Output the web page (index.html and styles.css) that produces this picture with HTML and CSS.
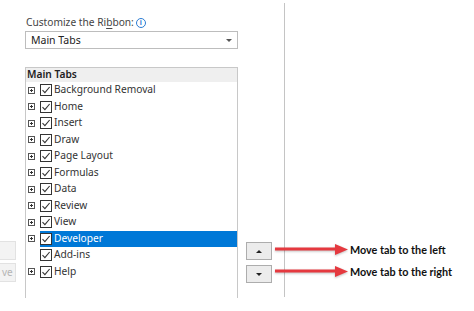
FILE: index.html
```html
<!DOCTYPE html>
<html lang="en">
<head>
  <meta charset="UTF-8">
  <meta name="viewport" content="width=device-width, initial-scale=1.0">
  <title>Customize the Ribbon</title>
  <link rel="stylesheet" href="styles.css">
</head>
<body>

  <div class="page">
    <div class="side-left">
      <div class="ghost-btn"></div>
      <div class="ghost-btn">ve</div>
    </div>

    <div class="panel">
      <div class="title">Customize the Ri<u>b</u>bon:<span class="info">i</span></div>

      <div class="select">
        <span>Main Tabs</span>
        <span class="caret"></span>
      </div>

      <div class="listbox">
        <div class="list-head">Main Tabs</div>

        <div class="row"><span class="plus"></span><div class="item"><span class="check"></span><span class="name">Background Removal</span></div></div>
        <div class="row"><span class="plus"></span><div class="item"><span class="check"></span><span class="name">Home</span></div></div>
        <div class="row"><span class="plus"></span><div class="item"><span class="check"></span><span class="name">Insert</span></div></div>
        <div class="row"><span class="plus"></span><div class="item"><span class="check"></span><span class="name">Draw</span></div></div>
        <div class="row"><span class="plus"></span><div class="item"><span class="check"></span><span class="name">Page Layout</span></div></div>
        <div class="row"><span class="plus"></span><div class="item"><span class="check"></span><span class="name">Formulas</span></div></div>
        <div class="row"><span class="plus"></span><div class="item"><span class="check"></span><span class="name">Data</span></div></div>
        <div class="row"><span class="plus"></span><div class="item"><span class="check"></span><span class="name">Review</span></div></div>
        <div class="row"><span class="plus"></span><div class="item"><span class="check"></span><span class="name">View</span></div></div>
        <div class="row"><span class="plus"></span><div class="item selected"><span class="check"></span><span class="name">Developer</span></div></div>
        <div class="row"><span class="no-plus"></span><div class="item"><span class="check"></span><span class="name">Add-ins</span></div></div>
        <div class="row"><span class="plus"></span><div class="item"><span class="check"></span><span class="name">Help</span></div></div>
      </div>
    </div>

    <div class="moves">
      <div class="move-btn"><span class="tri-up"></span></div>
      <div class="move-btn"><span class="tri-down"></span></div>
    </div>

    <div class="divider"></div>

    <!-- callouts drawn over the divider -->
    <div class="callouts">
      <div class="callout">
        <svg width="74" height="12" viewBox="0 0 74 12"><path d="M0 5h62" stroke="#e5393f" stroke-width="3"/><path d="M60 0l13 5.5L60 11z" fill="#e5393f"/></svg>
        <span>Move tab to the left</span>
      </div>
      <div class="callout">
        <svg width="74" height="12" viewBox="0 0 74 12"><path d="M0 5h62" stroke="#e5393f" stroke-width="3"/><path d="M60 0l13 5.5L60 11z" fill="#e5393f"/></svg>
        <span>Move tab to the right</span>
      </div>
    </div>
  </div>

</body>
</html>
```

FILE: styles.css
```css
body {
  margin: 0;
  background-color: white;
  font-family: "Noto Sans", "Open Sans", sans-serif;
  font-size: 10px;
  color: #333;
}

.page {
  position: relative;
  display: flex;
  height: 311px;
  overflow: hidden;
}

.side-left {
  width: 25px;
  padding-top: 241px;
  display: flex;
  flex-direction: column;
  gap: 3px;
}

.ghost-btn {
  width: 16px;
  height: 19px;
  box-sizing: border-box;
  background-color: #f3f3f3;
  border: 1px solid #e2e2e2;
  border-left: none;
  color: #b5b5b5;
  font-size: 10px;
  line-height: 17px;
  padding-left: 2px;
}

.panel {
  width: 213px;
  padding-top: 14px;
}

.title {
  height: 17px;
  line-height: 17px;
  padding-left: 1px;
  color: #444;
  font-size: 10.2px;
  display: flex;
  align-items: center;
}

.title u {
  text-underline-offset: 2px;
}

.info {
  width: 8px;
  height: 8px;
  margin-left: 2px;
  border: 1px solid #2b7cd3;
  border-radius: 50%;
  color: #2b7cd3;
  font-size: 7px;
  line-height: 8px;
  text-align: center;
  font-weight: bold;
}

.select {
  height: 18px;
  box-sizing: border-box;
  border: 1px solid #bdbdbd;
  display: flex;
  align-items: center;
  justify-content: space-between;
  padding: 0 5px 0 5px;
  color: #222;
  font-size: 10.5px;
}

.caret {
  width: 0;
  height: 0;
  border-left: 3px solid transparent;
  border-right: 3px solid transparent;
  border-top: 3px solid #555;
}

.listbox {
  margin-top: 18px;
  height: 230px;
  border: 1px solid #c8c8c8;
  border-bottom: none;
}

.list-head {
  height: 14px;
  line-height: 13px;
  background-color: #efefef;
  padding-left: 1px;
  font-weight: 600;
  font-size: 10.2px;
  color: #222;
}

.row {
  display: flex;
  align-items: center;
  height: 16.5px;
}

.plus, .no-plus {
  width: 7px;
  height: 7px;
  margin-left: 2px;
  margin-right: 5px;
  flex-shrink: 0;
}

.plus {
  box-sizing: border-box;
  border: 1px solid #555;
  background:
    linear-gradient(#333, #333) center / 3px 1px no-repeat,
    linear-gradient(#333, #333) center / 1px 3px no-repeat;
}

.item {
  flex: 1;
  height: 100%;
  display: flex;
  align-items: center;
  color: #333;
}

.item.selected {
  background-color: #0078d7;
  color: white;
}

.check {
  width: 12px;
  height: 12px;
  box-sizing: border-box;
  border: 1px solid #333;
  background: white url("data:image/svg+xml,%3Csvg xmlns='http://www.w3.org/2000/svg' viewBox='0 0 10 10'%3E%3Cpath d='M1.5 5.2l2.4 2.4L8.6 2' fill='none' stroke='%23333' stroke-width='1.1'/%3E%3C/svg%3E") center / 10px 10px no-repeat;
  flex-shrink: 0;
}

.name {
  margin-left: 2px;
  font-size: 10.2px;
  line-height: 12px;
  padding-bottom: 2px;
  white-space: nowrap;
}

.moves {
  margin-left: 8px;
  padding-top: 242px;
  display: flex;
  flex-direction: column;
  gap: 5px;
}

.move-btn {
  width: 26px;
  height: 18px;
  box-sizing: border-box;
  background-color: #ececec;
  border: 1px solid #adadad;
  display: flex;
  align-items: center;
  justify-content: center;
}

.tri-up, .tri-down {
  width: 0;
  height: 0;
  border-left: 3px solid transparent;
  border-right: 3px solid transparent;
}

.tri-up {
  border-bottom: 3px solid #222;
}

.tri-down {
  border-top: 3px solid #222;
}

.divider {
  margin-left: 12px;
  margin-top: 3px;
  width: 1px;
  height: 294px;
  background-color: #c4c4c4;
}

.callouts {
  position: absolute;
  left: 275px;
  top: 243px;
  display: flex;
  flex-direction: column;
  gap: 9px;
}

.callout {
  display: flex;
  align-items: center;
  height: 13px;
}

.callout svg {
  display: block;
  filter: drop-shadow(0 1px 1px rgba(0, 0, 0, 0.25));
}

.callout span {
  margin-left: 1px;
  font-family: "Lato", sans-serif;
  font-weight: bold;
  font-size: 10.8px;
  color: #111;
  white-space: nowrap;
}
```
